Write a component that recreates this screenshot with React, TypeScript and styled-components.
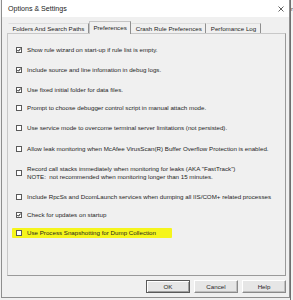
import React from "react";
import styled, { createGlobalStyle } from "styled-components";

const Global = createGlobalStyle`
  html, body { margin: 0; padding: 0; background: #f0f0f0; }
  body {
    width: 293px;
    height: 300px;
    overflow: hidden;
    font-family: "Liberation Sans", Arial, sans-serif;
  }
  * { box-sizing: border-box; }
`;

const Screen = styled.div`
  display: flex;
  width: 293px;
  height: 300px;
  padding-left: 1px;
  background: #f0f0f0;
`;

const Window = styled.div`
  width: 289px;
  height: 298px;
  display: flex;
  flex-direction: column;
  border: 1px solid #8e8e8e;
  border-top: none;
  background: #f0f0f0;
`;

const BackStrip = styled.div`
  flex: 1;
  background: #f4f4f4;
  border-left: 1px solid #6f6f6f;
  overflow: hidden;
  font-size: 6px;
  color: #444;
  padding-top: 6px;
  white-space: nowrap;
`;

const TitleBar = styled.div`
  height: 17px;
  flex: none;
  background: #ffffff;
  display: flex;
  align-items: center;
  justify-content: space-between;
  padding: 0 5px 0 6px;
`;

const Title = styled.span`
  font-size: 7.1px;
  color: #1a1a1a;
`;

const Body = styled.div`
  flex: 1;
  display: flex;
  flex-direction: column;
  padding: 4px 3px 4px 5px;
`;

const TabStrip = styled.div`
  height: 12px;
  display: flex;
  align-items: flex-end;
  padding-left: 1px;
`;

const Tab = styled.div<{ $active?: boolean }>`
  height: ${(p) => (p.$active ? "13px" : "10px")};
  margin-bottom: ${(p) => (p.$active ? "-1px" : "0")};
  position: relative;
  z-index: ${(p) => (p.$active ? 2 : 1)};
  padding: 0 ${(p) => (p.$active ? "3.5px" : "3.5px")};
  font-size: 6.2px;
  line-height: ${(p) => (p.$active ? "11px" : "10px")};
  color: #1e1e1e;
  white-space: nowrap;
  background: #f0f0f0;
  border-top: 1px solid ${(p) => (p.$active ? "#c4c4c4" : "#dedede")};
  border-left: 1px solid ${(p) => (p.$active ? "#c4c4c4" : "transparent")};
  border-right: 1px solid #8f8f8f;
`;

const Panel = styled.div`
  height: 243px;
  flex: none;
  border: 1px solid;
  border-color: #c8c8c8 #9a9a9a #9a9a9a #c8c8c8;
  padding: 12px 6px 0 8px;
  display: flex;
  flex-direction: column;
`;

const Row = styled.div<{ $gap: number }>`
  margin-top: ${(p) => p.$gap}px;
  display: flex;
  align-items: center;
  gap: 5px;
`;

const Highlight = styled.div`
  display: flex;
  align-items: center;
  gap: 5px;
  height: 10px;
  margin-left: -4px;
  padding: 0 16px 0 4px;
  background: #f5f51c;
  border-radius: 1px;
`;

const Box = styled.div`
  width: 6px;
  height: 6px;
  flex: none;
  background: #ffffff;
  border: 1px solid #5a5a5a;
  display: flex;
  align-items: center;
  justify-content: center;
`;

const Label = styled.div`
  font-size: 6.2px;
  line-height: 8px;
  color: #1e1e1e;
  white-space: pre;
`;

const ButtonBar = styled.div`
  margin-top: 4px;
  display: flex;
  justify-content: flex-end;
  gap: 4px;
`;

const Button = styled.div<{ $default?: boolean }>`
  width: 44px;
  height: 13px;
  display: flex;
  align-items: center;
  justify-content: center;
  font-size: 6.2px;
  color: #1e1e1e;
  background: #e6e6e6;
  border: 1px solid;
  border-color: ${(p) =>
    p.$default ? "#5a5a5a" : "#ffffff #8a8a8a #8a8a8a #ffffff"};
  box-shadow: ${(p) =>
    p.$default ? "inset 1px 1px 0 #ffffff, inset -1px -1px 0 #a0a0a0" : "inset -1px -1px 0 #c0c0c0"};
`;

const Check = () => (
  <svg width="4" height="4" viewBox="0 0 4 4">
    <path d="M0.4 2 L1.5 3.2 L3.6 0.6" fill="none" stroke="#111" strokeWidth="1" />
  </svg>
);

const CloseIcon = () => (
  <svg width="6" height="6" viewBox="0 0 6 6">
    <path d="M0.5 0.5 L5.5 5.5 M5.5 0.5 L0.5 5.5" stroke="#3a3a3a" strokeWidth="0.8" />
  </svg>
);

type Item = { lines: string[]; checked: boolean; gap: number; highlight?: boolean };

const items: Item[] = [
  { lines: ["Show rule wizard on start-up if rule list is empty."], checked: true, gap: 0 },
  { lines: ["Include source and line infomation in debug logs."], checked: true, gap: 12 },
  { lines: ["Use fixed initial folder for data files."], checked: true, gap: 12 },
  { lines: ["Prompt to choose debugger control script in manual attach mode."], checked: false, gap: 10 },
  { lines: ["Use service mode to overcome terminal server limitations (not persisted)."], checked: false, gap: 12 },
  { lines: ["Allow leak monitoring when McAfee VirusScan(R) Buffer Overflow Protection is enabled."], checked: false, gap: 13 },
  {
    lines: [
      'Record call stacks immediately when monitoring for leaks (AKA "FastTrack")',
      "NOTE:  not recommended when monitoring longer than 15 minutes.",
    ],
    checked: false,
    gap: 12,
  },
  { lines: ["Include RpcSs and DcomLaunch services when dumping all IIS/COM+ related processes"], checked: false, gap: 12 },
  { lines: ["Check for updates on startup"], checked: true, gap: 10 },
  { lines: ["Use Process Snapshotting for Dump Collection"], checked: false, gap: 9, highlight: true },
];

const tabs = ["Folders And Search Paths", "Preferences", "Crash Rule Preferences", "Perfomance Log"];

export default function App() {
  return (
    <>
      <Global />
      <Screen>
        <Window>
          <TitleBar>
            <Title>Options &amp; Settings</Title>
            <CloseIcon />
          </TitleBar>
          <Body>
            <TabStrip>
              {tabs.map((t) => (
                <Tab key={t} $active={t === "Preferences"}>
                  {t}
                </Tab>
              ))}
            </TabStrip>
            <Panel>
              {items.map((it, i) => {
                const content = (
                  <>
                    <Box>{it.checked && <Check />}</Box>
                    <Label>{it.lines.join("\n")}</Label>
                  </>
                );
                return (
                  <Row key={i} $gap={it.gap}>
                    {it.highlight ? <Highlight>{content}</Highlight> : content}
                  </Row>
                );
              })}
            </Panel>
            <ButtonBar>
              <Button $default>OK</Button>
              <Button>Cancel</Button>
              <Button>Help</Button>
            </ButtonBar>
          </Body>
        </Window>
        <BackStrip>r</BackStrip>
      </Screen>
    </>
  );
}
